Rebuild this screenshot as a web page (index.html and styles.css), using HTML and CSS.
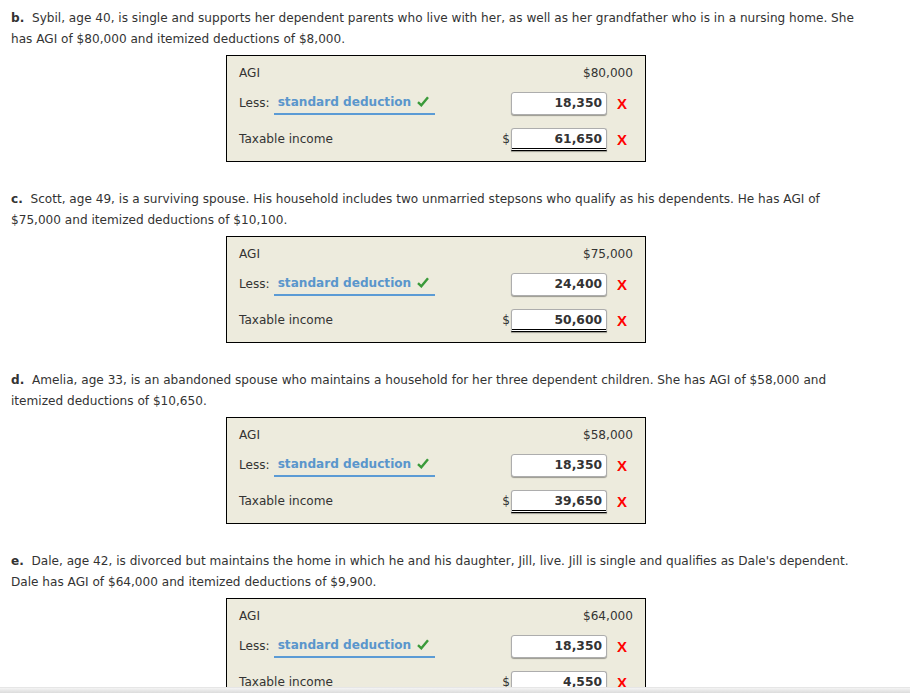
FILE: index.html
```html
<!DOCTYPE html>
<html>
<head>
<meta charset="utf-8">
<link rel="stylesheet" href="styles.css">
</head>
<body>
<div class="page">
  <section class="part">
    <p class="q"><b>b.</b>&nbsp; Sybil, age 40, is single and supports her dependent parents who live with her, as well as her grandfather who is in a nursing home. She has AGI of $80,000 and itemized deductions of $8,000.</p>
    <div class="box">
      <div class="row row-agi"><span class="label">AGI</span><span class="amt">$80,000</span></div>
      <div class="row row-less">
        <span class="label">Less:</span>
        <span class="select">standard deduction <svg class="check" width="12" height="11" viewBox="0 0 12 11"><path d="M1 6.2 L4.3 9.3 L11 1.2" fill="none" stroke="#3a9a3a" stroke-width="2.4"/></svg></span>
        <span class="spacer"></span>
        <span class="input">18,350</span><span class="mark">X</span>
      </div>
      <div class="row row-tax">
        <span class="label">Taxable income</span>
        <span class="spacer"></span>
        <span class="dollar">$</span><span class="input total">61,650</span><span class="mark">X</span>
      </div>
    </div>
  </section>
  <section class="part">
    <p class="q"><b>c.</b>&nbsp; Scott, age 49, is a surviving spouse. His household includes two unmarried stepsons who qualify as his dependents. He has AGI of $75,000 and itemized deductions of $10,100.</p>
    <div class="box">
      <div class="row row-agi"><span class="label">AGI</span><span class="amt">$75,000</span></div>
      <div class="row row-less">
        <span class="label">Less:</span>
        <span class="select">standard deduction <svg class="check" width="12" height="11" viewBox="0 0 12 11"><path d="M1 6.2 L4.3 9.3 L11 1.2" fill="none" stroke="#3a9a3a" stroke-width="2.4"/></svg></span>
        <span class="spacer"></span>
        <span class="input">24,400</span><span class="mark">X</span>
      </div>
      <div class="row row-tax">
        <span class="label">Taxable income</span>
        <span class="spacer"></span>
        <span class="dollar">$</span><span class="input total">50,600</span><span class="mark">X</span>
      </div>
    </div>
  </section>
  <section class="part">
    <p class="q"><b>d.</b>&nbsp; Amelia, age 33, is an abandoned spouse who maintains a household for her three dependent children. She has AGI of $58,000 and itemized deductions of $10,650.</p>
    <div class="box">
      <div class="row row-agi"><span class="label">AGI</span><span class="amt">$58,000</span></div>
      <div class="row row-less">
        <span class="label">Less:</span>
        <span class="select">standard deduction <svg class="check" width="12" height="11" viewBox="0 0 12 11"><path d="M1 6.2 L4.3 9.3 L11 1.2" fill="none" stroke="#3a9a3a" stroke-width="2.4"/></svg></span>
        <span class="spacer"></span>
        <span class="input">18,350</span><span class="mark">X</span>
      </div>
      <div class="row row-tax">
        <span class="label">Taxable income</span>
        <span class="spacer"></span>
        <span class="dollar">$</span><span class="input total">39,650</span><span class="mark">X</span>
      </div>
    </div>
  </section>
  <section class="part">
    <p class="q"><b>e.</b>&nbsp; Dale, age 42, is divorced but maintains the home in which he and his daughter, Jill, live. Jill is single and qualifies as Dale's dependent. Dale has AGI of $64,000 and itemized deductions of $9,900.</p>
    <div class="box">
      <div class="row row-agi"><span class="label">AGI</span><span class="amt">$64,000</span></div>
      <div class="row row-less">
        <span class="label">Less:</span>
        <span class="select">standard deduction <svg class="check" width="12" height="11" viewBox="0 0 12 11"><path d="M1 6.2 L4.3 9.3 L11 1.2" fill="none" stroke="#3a9a3a" stroke-width="2.4"/></svg></span>
        <span class="spacer"></span>
        <span class="input">18,350</span><span class="mark">X</span>
      </div>
      <div class="row row-tax">
        <span class="label">Taxable income</span>
        <span class="spacer"></span>
        <span class="dollar">$</span><span class="input total">4,550</span><span class="mark">X</span>
      </div>
    </div>
  </section>
</div>
<div class="scrollbar"></div>
</body>
</html>
```
FILE: styles.css
```css
html, body {
  margin: 0;
  padding: 0;
  background: #fff;
  overflow: hidden;
}
body {
  font-family: "DejaVu Sans", Verdana, sans-serif;
  font-size: 12.1px;
  color: #333;
}
.page {
  width: 850px;
  margin-left: 11px;
  padding-top: 8px;
}
.part {
  margin-bottom: 27px;
}
.q {
  margin: 0 0 5px 0;
  line-height: 21px;
}
.box {
  width: 420px;
  box-sizing: border-box;
  margin: 0 auto;
  border: 1px solid #000;
  background: #edebdd;
  padding: 9px 12px 10px 12px;
  line-height: 17px;
}
.row {
  display: flex;
  align-items: center;
}
.row-agi {
  height: 17px;
  margin-bottom: 10px;
  justify-content: space-between;
}
.row-less {
  height: 23px;
  margin-bottom: 13px;
}
.row-tax {
  height: 23px;
}
.spacer {
  flex: 1;
}
.select {
  margin-left: 4px;
  width: 161px;
  box-sizing: border-box;
  padding-left: 4px;
  border-bottom: 2px solid #5b9bd5;
  color: #5a96cc;
  font-weight: bold;
  font-size: 12.1px;
  white-space: nowrap;
  height: 23px;
  line-height: 21px;
}
.check {
  margin-left: 2px;
  vertical-align: -1px;
}
.input {
  width: 96px;
  height: 23px;
  box-sizing: border-box;
  background: #fff;
  border: 1px solid #adadad;
  border-radius: 3px;
  box-shadow: 0 1px 1px rgba(0,0,0,0.35);
  text-align: right;
  padding-right: 4px;
  font-weight: bold;
  font-size: 12.3px;
  line-height: 21px;
}
.input.total {
  border-bottom: 3px double #000;
  border-radius: 3px 3px 0 0;
  line-height: 20px;
}
.dollar {
  margin-right: 1px;
}
.mark {
  width: 26px;
  box-sizing: border-box;
  padding-left: 10px;
  color: #f00;
  font-family: "Liberation Sans", Arial, sans-serif;
  font-weight: bold;
  font-size: 15px;
}
.scrollbar {
  position: fixed;
  left: 0;
  right: 0;
  bottom: 0;
  height: 5px;
  background: linear-gradient(#f4f4f4, #dcdcdc);
  border-top: 1px solid #e6e6e6;
}
```
